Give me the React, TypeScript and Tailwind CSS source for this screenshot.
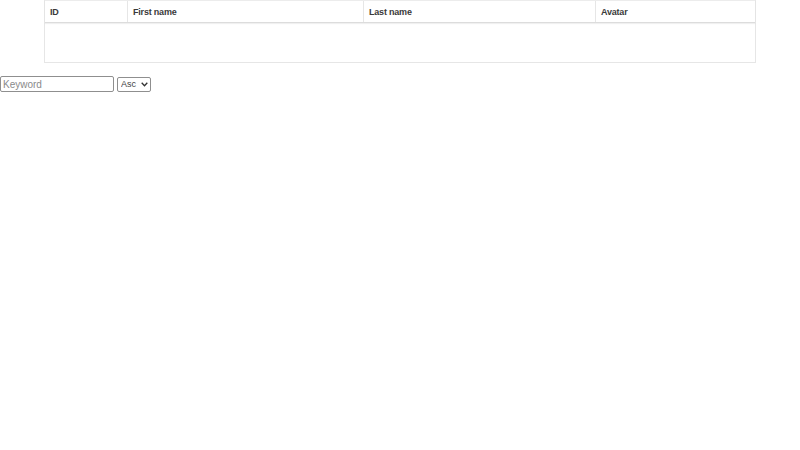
export default function App() {
  const cols = [
    { label: "ID", w: "w-[82px]" },
    { label: "First name", w: "w-[236px]" },
    { label: "Last name", w: "w-[232px]" },
    { label: "Avatar", w: "flex-1" },
  ];

  return (
    <div className="min-h-[450px] bg-white font-['Liberation_Sans',Arial,sans-serif] text-[#333]">
      {/* table */}
      <div className="mx-auto w-[712px] border border-[#e6e6e6] border-t-0">
        <div className="flex h-[23px] border-t border-[#ececec] border-b border-b-[#dcdcdc] shadow-[0_1px_1px_rgba(0,0,0,0.06)]">
          {cols.map((c, i) => (
            <div
              key={c.label}
              className={`${c.w} flex items-center pt-[2px] pl-[5px] text-[9px] font-bold tracking-[-0.2px] text-[#3a3a3a] ${
                i > 0 ? "border-l border-[#e6e6e6]" : ""
              }`}
            >
              {c.label}
            </div>
          ))}
        </div>
        <div className="h-[39px]" />
      </div>

      {/* filters */}
      <div className="mt-[13px] flex items-center gap-[3px]">
        <input
          placeholder="Keyword"
          className="h-[16px] w-[114px] rounded-[2px] border border-[#8f8f8f] px-[2px] text-[10px] text-[#333] placeholder:text-[#8a8a8a] outline-none"
        />
        <div className="relative">
          <select className="block h-[15px] w-[34px] appearance-none rounded-[2px] border border-[#8f8f8f] bg-white pl-[3px] text-[9px] leading-none text-[#444] outline-none">
            <option>Asc</option>
            <option>Desc</option>
          </select>
          <svg
            className="pointer-events-none absolute right-[3px] top-[5px] h-[5px] w-[7px]"
            viewBox="0 0 7 5"
            fill="none"
            stroke="#333"
            strokeWidth="1.3"
          >
            <path d="M0.7 0.8 L3.5 3.8 L6.3 0.8" />
          </svg>
        </div>
      </div>
    </div>
  );
}
